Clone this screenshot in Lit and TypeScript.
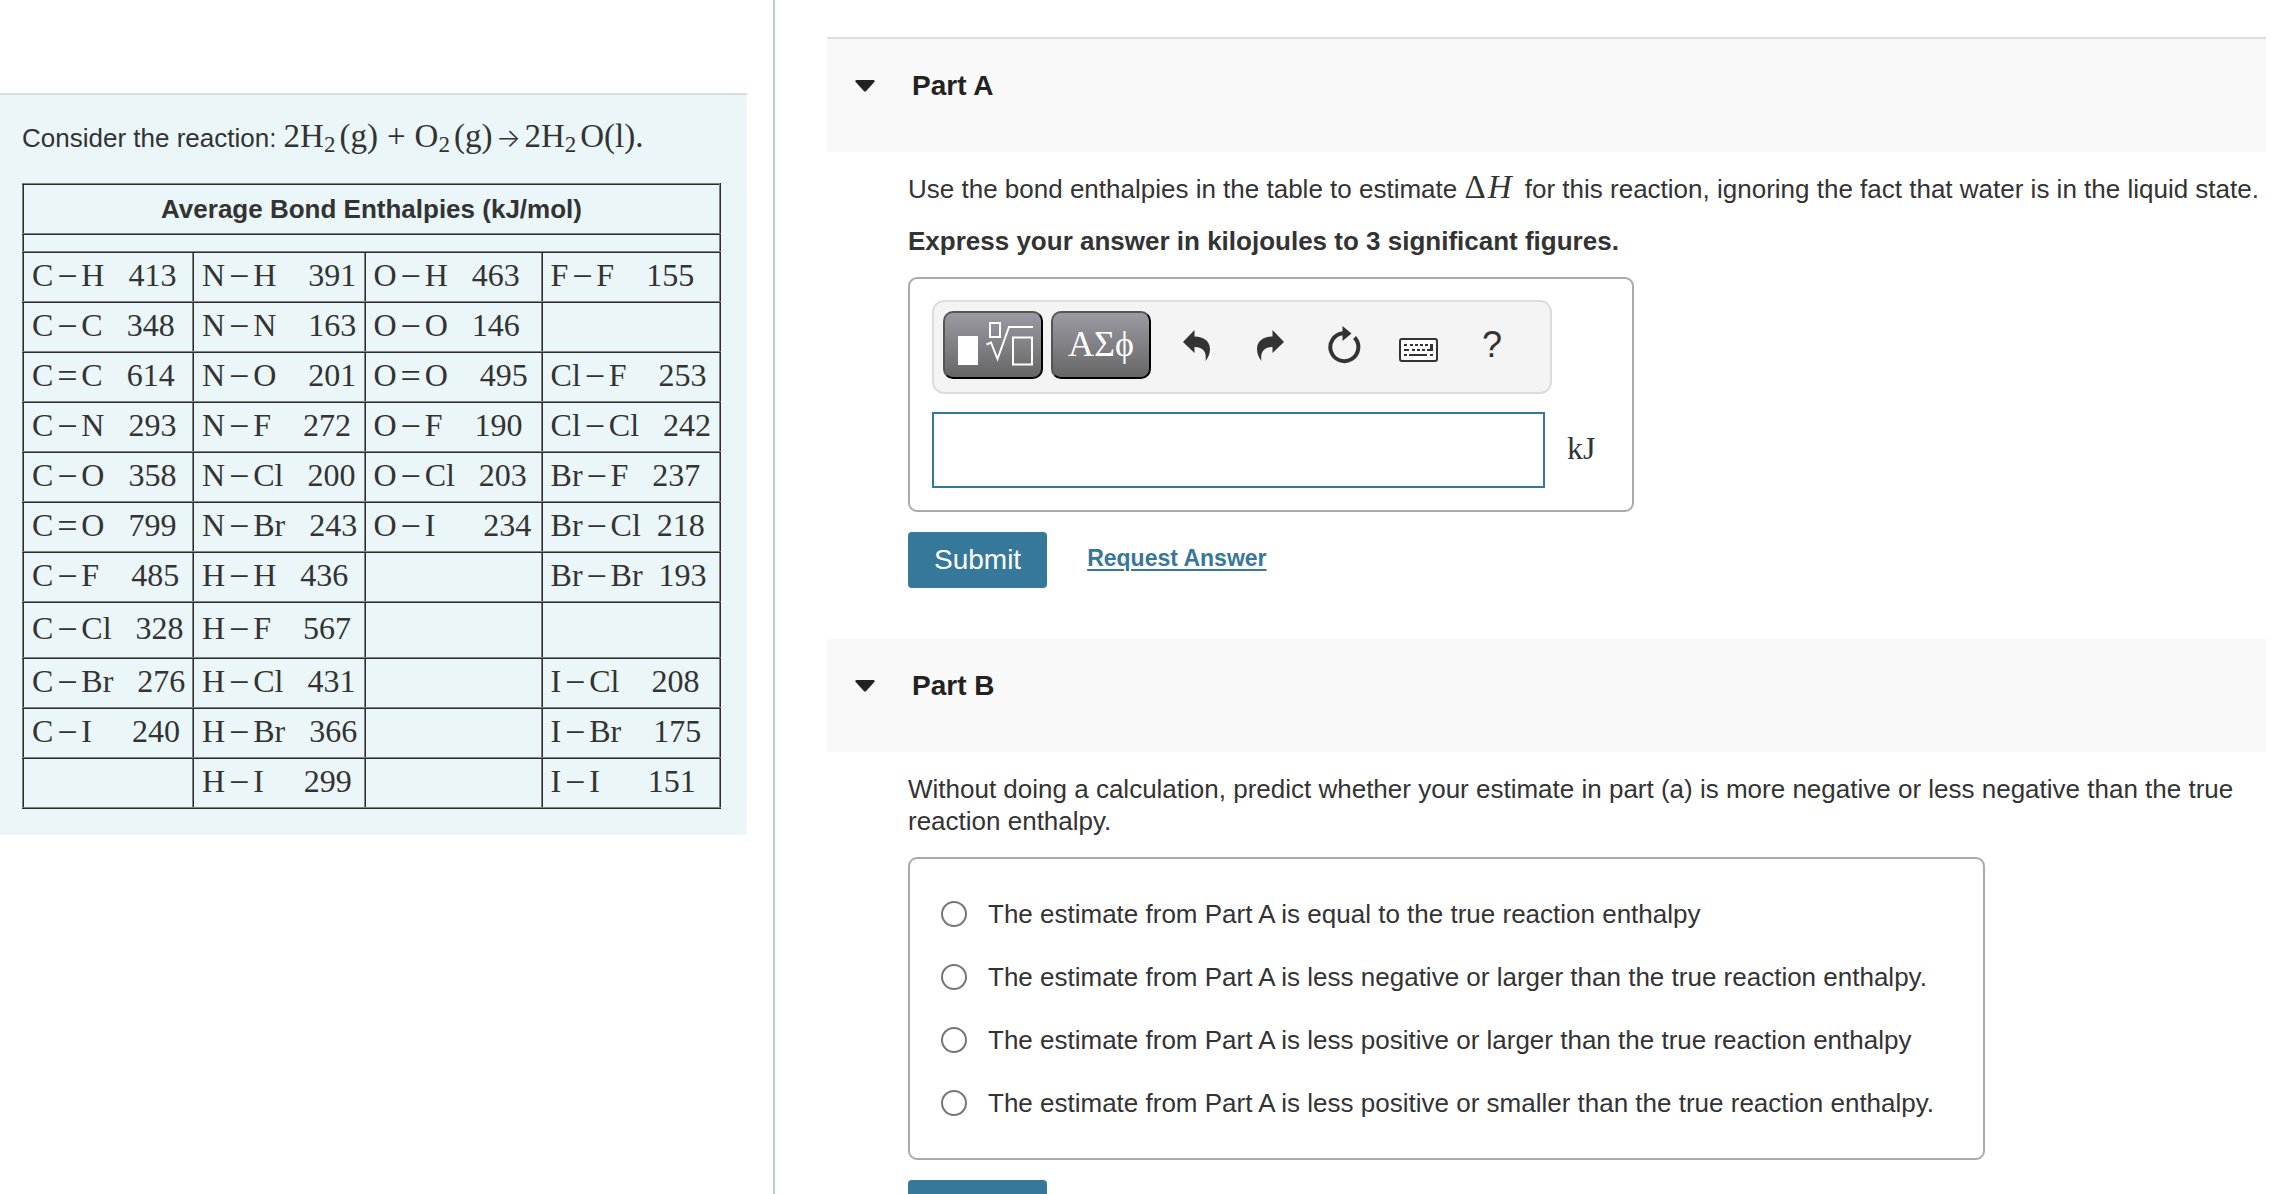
import { LitElement, html, css, svg, nothing } from "lit";
import { customElement, state } from "lit/decorators.js";

/** A bond, the spaces that follow it, and its enthalpy in kJ/mol. */
type Bond = [left: string, link: string, right: string, spaces: number, value: number] | null;

const ROWS: Bond[][] = [
  [["C", "−", "H", 3, 413], ["N", "−", "H", 4, 391], ["O", "−", "H", 3, 463], ["F", "−", "F", 4, 155]],
  [["C", "−", "C", 3, 348], ["N", "−", "N", 4, 163], ["O", "−", "O", 3, 146], null],
  [["C", "=", "C", 3, 614], ["N", "−", "O", 4, 201], ["O", "=", "O", 4, 495], ["Cl", "−", "F", 4, 253]],
  [["C", "−", "N", 3, 293], ["N", "−", "F", 4, 272], ["O", "−", "F", 4, 190], ["Cl", "−", "Cl", 3, 242]],
  [["C", "−", "O", 3, 358], ["N", "−", "Cl", 3, 200], ["O", "−", "Cl", 3, 203], ["Br", "−", "F", 3, 237]],
  [["C", "=", "O", 3, 799], ["N", "−", "Br", 3, 243], ["O", "−", "I", 6, 234], ["Br", "−", "Cl", 2, 218]],
  [["C", "−", "F", 4, 485], ["H", "−", "H", 3, 436], null, ["Br", "−", "Br", 2, 193]],
  [["C", "−", "Cl", 3, 328], ["H", "−", "F", 4, 567], null, null],
  [["C", "−", "Br", 3, 276], ["H", "−", "Cl", 3, 431], null, ["I", "−", "Cl", 4, 208]],
  [["C", "−", "I", 5, 240], ["H", "−", "Br", 3, 366], null, ["I", "−", "Br", 4, 175]],
  [null, ["H", "−", "I", 5, 299], null, ["I", "−", "I", 6, 151]],
];

const TALL_ROW = 7;

const CHOICES = [
  "The estimate from Part A is equal to the true reaction enthalpy",
  "The estimate from Part A is less negative or larger than the true reaction enthalpy.",
  "The estimate from Part A is less positive or larger than the true reaction enthalpy",
  "The estimate from Part A is less positive or smaller than the true reaction enthalpy.",
];

const templateIcon = html`<svg class="template" viewBox="-6 0 82 44" aria-hidden="true">
  <rect x="0" y="14" width="20" height="29" fill="#fff" />
  <g fill="none" stroke="#fff" stroke-width="2">
    <rect x="32" y="1" width="10" height="14" />
    <path d="M28.500 22.500 L33 20.500 L39.500 37 L51 5 H75" />
    <rect x="55" y="15.500" width="19" height="27" />
  </g>
</svg>`;

const undoPath = svg`<path d="M0 12 L11.500 0 V6.500 C21 6.500 27 11.500 27 19 C27 24 25 28 22.500 31 C24 22.500 20.500 17 11.500 17 V23 Z" fill="#333" />`;

const undoIcon = html`<svg class="arrow" viewBox="0 0 27 31" aria-hidden="true">${undoPath}</svg>`;
const redoIcon = html`<svg class="arrow" viewBox="0 0 27 31" aria-hidden="true">
  <g transform="translate(27 0) scale(-1 1)">${undoPath}</g>
</svg>`;

const resetIcon = html`<svg class="reset" viewBox="0 0 34 38" aria-hidden="true">
  <path d="M27.500 11.500 A14 14 0 1 1 16 7.200" fill="none" stroke="#333" stroke-width="4" />
  <path d="M15.500 0 L24.500 7.500 L15.500 15 Z" fill="#333" />
</svg>`;

const keyboardIcon = html`<svg class="keyboard" viewBox="0 0 39 24" aria-hidden="true">
  <rect x="1" y="1" width="37" height="22" rx="2" fill="#fff" stroke="#333" stroke-width="2" />
  <g fill="#333">
    <path d="M5 6h3v2h-3zM11 6h3v2h-3zM16 6h3v2h-3zM21 6h3v2h-3zM26 6h3v2h-3z" />
    <path d="M5 11h5v2h-5zM13 11h3v2h-3zM18 11h3v2h-3zM23 11h3v2h-3z" />
    <path d="M31 6h3v7h-6v-2h3z" />
    <path d="M5 16h3v2h-3zM10 16h18v2h-18zM31 16h3v2h-3z" />
  </g>
</svg>`;

const caretIcon = html`<svg class="caret" viewBox="0 0 20 12" aria-hidden="true">
  <path d="M1.500 0 H18.500 Q20.500 0.500 19.300 2 L11.200 11 Q10 12.200 8.800 11 L0.700 2 Q-0.500 0.500 1.500 0 Z" fill="#222" />
</svg>`;

@customElement("app-root")
export class AppRoot extends LitElement {
  @state() private openA = true;
  @state() private openB = true;

  static styles = css`
    :host {
      display: block;
      background: #fff;
      color: #333;
      font: 26px/32px "Liberation Sans", Arial, sans-serif;
    }
    * {
      box-sizing: border-box;
    }
    p,
    h2 {
      margin: 0;
    }
    button {
      font: inherit;
      color: inherit;
      cursor: pointer;
    }
    svg {
      display: block;
    }
    .page {
      display: grid;
      grid-template-columns: minmax(0, 775fr) minmax(0, 1513fr);
      height: 100vh;
    }
    .side {
      border-right: 2px solid #bcc8d8;
      padding: 93px 26px 0 0;
      overflow: auto;
      scrollbar-width: none;
    }
    .main {
      padding: 37px 22px 0 52px;
      overflow: auto;
      scrollbar-width: none;
    }
    .problem {
      border-top: 2px solid #ddd;
      background: #eaf6f8;
      padding: 27px 26px 26px 22px;
    }
    .math {
      font-family: "Liberation Serif", "Times New Roman", serif;
      font-size: 32px;
      line-height: 32px;
      white-space: nowrap;
    }
    .formula {
      font-size: 33px;
      line-height: 0;
    }
    .intro {
      margin-bottom: 29px;
    }
    .sub {
      font-size: 23px;
      line-height: 0;
      vertical-align: -5px;
      margin-right: 4px;
    }
    .plus {
      margin: 0 9px;
    }
    .yields {
      display: inline-flex;
      justify-content: center;
      width: 32px;
      font-family: Inter, sans-serif;
      font-size: 26px;
      font-weight: 300;
    }
    .delta {
      margin: 0 6px 0 2px;
    }
    .bonds {
      width: 100%;
      border-collapse: collapse;
      table-layout: fixed;
    }
    .bonds th,
    .bonds td {
      border: 2px inset gray;
      padding: 0;
      height: 50px;
    }
    .bonds .spacer {
      height: 18px;
    }
    .bonds .bond {
      padding: 0 0 4px 8px;
    }
    .bonds .tall {
      height: 56px;
    }
    .c1 {
      width: 24.4%;
    }
    .c2 {
      width: 24.6%;
    }
    .c3 {
      width: 25.4%;
    }
    .link {
      display: inline-block;
      width: 28px;
      font-size: 36px;
      line-height: 0;
      text-align: center;
      vertical-align: -2px;
    }
    .head {
      background: #f9f9f9;
      padding: 31px 0 50px 28px;
      color: #222;
    }
    .first {
      border-top: 2px solid #ddd;
    }
    .title {
      font-size: 28px;
      line-height: 32px;
    }
    .toggle {
      display: flex;
      align-items: center;
      gap: 37px;
      padding: 0;
      border: 0;
      background: none;
    }
    .caret {
      width: 20px;
      height: 12px;
    }
    .closed .caret {
      transform: rotate(-90deg);
    }
    .body {
      display: flex;
      flex-direction: column;
      align-items: flex-start;
      gap: 20px;
      padding: 21px 0 51px 81px;
    }
    .strong {
      font-weight: bold;
    }
    .box {
      border: 2px solid #aaa;
      border-radius: 9px;
    }
    .answer {
      display: grid;
      grid-template-columns: auto auto;
      align-items: center;
      gap: 18px 15px;
      padding: 21px 37px 22px 22px;
    }
    .toolbar {
      display: flex;
      align-items: center;
      width: 620px;
      height: 94px;
      padding: 0 0 4px 9px;
      border: 2px solid #ddd;
      border-radius: 12px;
      background: #f4f4f4;
    }
    .key {
      display: flex;
      align-items: center;
      justify-content: center;
      width: 100px;
      height: 68px;
      margin-right: 8px;
      padding: 0 0 2px;
      border: 2px solid;
      border-color: #555 #000 #000 #555;
      border-radius: 10px;
      background: linear-gradient(#9c9aa3, #666);
      color: #fff;
      font: 36px/40px "Liberation Serif", serif;
    }
    .template {
      width: 82px;
      height: 44px;
    }
    .tool {
      display: flex;
      align-items: center;
      justify-content: center;
      width: 74px;
      height: 68px;
      padding: 0;
      border: 0;
      background: none;
      font-size: 36px;
      line-height: 40px;
    }
    .arrow {
      width: 27px;
      height: 31px;
    }
    .reset {
      width: 34px;
      height: 38px;
    }
    .keyboard {
      width: 39px;
      height: 24px;
      margin-top: 10px;
    }
    .value {
      grid-column: 1;
      width: 613px;
      height: 76px;
      padding: 0 12px;
      border: 2px solid #36789a;
      background: #fff;
      font: inherit;
      color: inherit;
      outline: none;
    }
    .unit {
      padding-bottom: 4px;
    }
    .actions {
      display: flex;
      align-items: center;
      gap: 40px;
    }
    .submit {
      height: 56px;
      padding: 0 26px;
      border: 0;
      border-radius: 4px;
      background: #36789a;
      color: #fff;
      font-size: 28px;
    }
    .request {
      padding-bottom: 4px;
      color: #36789a;
      font-size: 23px;
      font-weight: bold;
      text-decoration-thickness: 2px;
      text-underline-offset: 3px;
    }
    .choices {
      display: flex;
      flex-direction: column;
      gap: 31px;
      margin: 0;
      padding: 39px 49px 39px 31px;
    }
    .choice {
      display: flex;
      align-items: center;
      gap: 21px;
    }
    .radio {
      appearance: none;
      flex: none;
      width: 26px;
      height: 26px;
      margin: 0;
      border: 2px solid #767676;
      border-radius: 50%;
      background: #fff;
    }
    .radio:checked {
      box-shadow: inset 0 0 0 4px #fff;
      background: #36789a;
    }
  `;

  private bond(b: Bond, tall: boolean) {
    return html`<td class="bond math ${tall ? "tall" : ""}">${b
      ? html`${b[0]}<span class="link">${b[1]}</span>${b[2]}${"\u00a0".repeat(b[3])}${b[4]}`
      : nothing}</td>`;
  }

  private head(title: string, open: boolean, first: boolean, toggle: () => void) {
    return html`<header class="head ${first ? "first" : ""}">
      <h2 class="title">
        <button class="toggle strong ${open ? "" : "closed"}" type="button" aria-expanded=${open} @click=${toggle}>
          ${caretIcon}<span>${title}</span>
        </button>
      </h2>
    </header>`;
  }

  private actions() {
    return html`<div class="actions">
      <button class="submit" type="submit">Submit</button>
      <a class="request" href="#answer">Request Answer</a>
    </div>`;
  }

  private partA() {
    return html`<form class="body" @submit=${this.hold}>
      <p>
        Use the bond enthalpies in the table to estimate
        <span class="math formula">Δ<i class="delta">H</i></span> for this reaction, ignoring the fact that water is in
        the liquid state.
      </p>
      <p class="strong"><label for="value">Express your answer in kilojoules to 3 significant figures.</label></p>
      <div class="box answer">
        <div class="toolbar" role="toolbar">
          <button class="key" type="button" aria-label="Templates">${templateIcon}</button>
          <button class="key" type="button">ΑΣϕ</button>
          <button class="tool" type="button" aria-label="Undo">${undoIcon}</button>
          <button class="tool" type="button" aria-label="Redo">${redoIcon}</button>
          <button class="tool" type="button" aria-label="Reset">${resetIcon}</button>
          <button class="tool" type="button" aria-label="Keyboard">${keyboardIcon}</button>
          <button class="tool" type="button">?</button>
        </div>
        <input class="value" id="value" type="text" autocomplete="off" />
        <span class="math unit">kJ</span>
      </div>
      ${this.actions()}
    </form>`;
  }

  private partB() {
    return html`<form class="body" @submit=${this.hold}>
      <p>
        Without doing a calculation, predict whether your estimate in part (a) is more negative or less negative than
        the true reaction enthalpy.
      </p>
      <fieldset class="box choices">
        ${CHOICES.map(
          (text) => html`<label class="choice"><input class="radio" type="radio" name="estimate" />${text}</label>`,
        )}
      </fieldset>
      ${this.actions()}
    </form>`;
  }

  private hold(event: Event) {
    event.preventDefault();
  }

  render() {
    const two = html`<span class="sub">2</span>`;
    return html`<div class="page">
      <aside class="side">
        <section class="problem">
          <p class="intro">
            Consider the reaction:
            <span class="math formula"
              >2H${two}(g)<span class="plus">+</span>O${two}(g)<span class="yields">→</span>2H${two}O(l).</span
            >
          </p>
          <table class="bonds">
            <colgroup>
              <col class="c1" />
              <col class="c2" />
              <col class="c3" />
              <col />
            </colgroup>
            <thead>
              <tr><th colspan="4">Average Bond Enthalpies (kJ/mol)</th></tr>
            </thead>
            <tbody>
              <tr><td class="spacer" colspan="4"></td></tr>
              ${ROWS.map((row, i) => html`<tr>${row.map((b) => this.bond(b, i === TALL_ROW))}</tr>`)}
            </tbody>
          </table>
        </section>
      </aside>
      <main class="main">
        <section>
          ${this.head("Part A", this.openA, true, () => (this.openA = !this.openA))}
          ${this.openA ? this.partA() : nothing}
        </section>
        <section>
          ${this.head("Part B", this.openB, false, () => (this.openB = !this.openB))}
          ${this.openB ? this.partB() : nothing}
        </section>
      </main>
    </div>`;
  }
}
